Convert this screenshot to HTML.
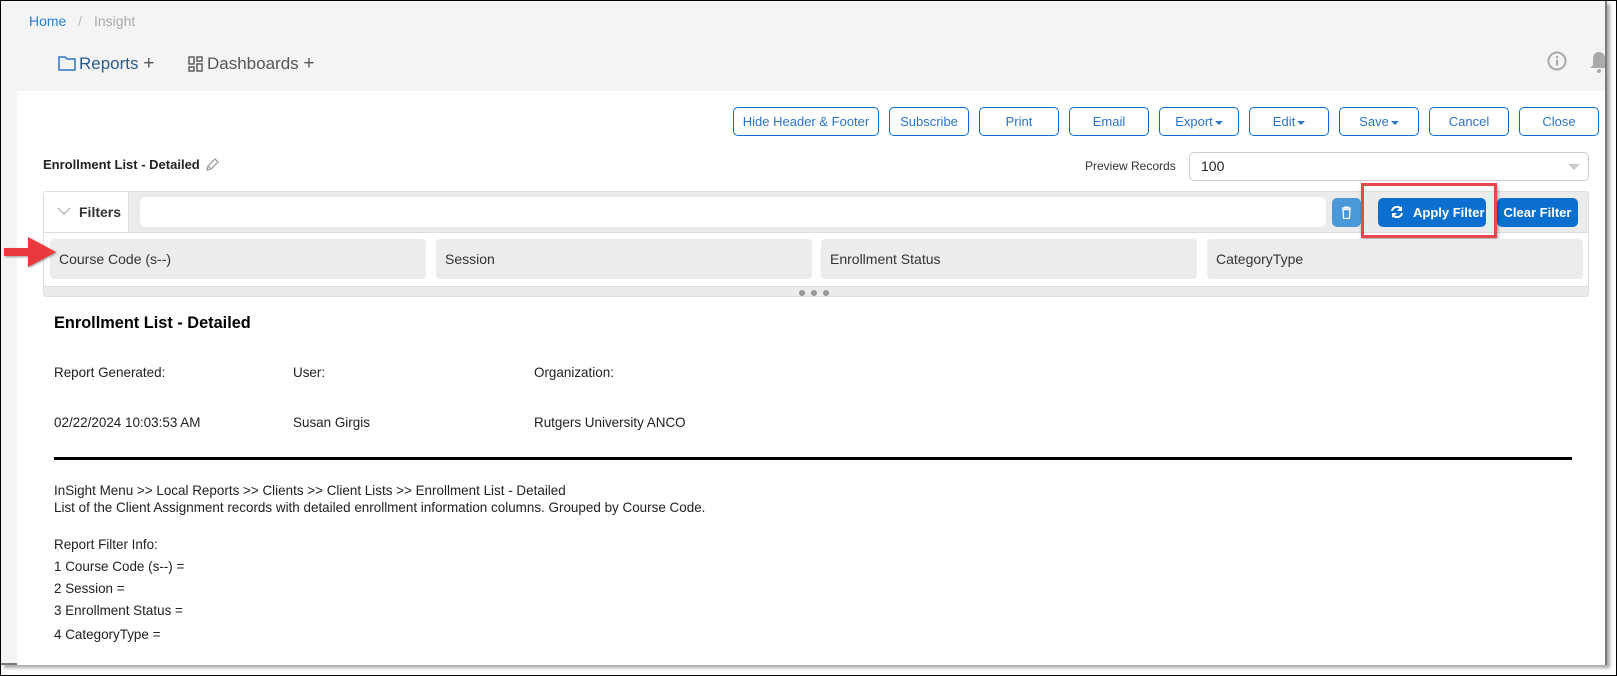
<!DOCTYPE html>
<html><head><style>
*{box-sizing:border-box;margin:0;padding:0}
body{width:1617px;height:676px;background:#fff;position:relative;overflow:hidden;font-family:"Liberation Sans",sans-serif;color:#222}
.abs{position:absolute}
#outer{left:0;top:0;width:1617px;height:676px;border:1px solid #000}
#frame{left:1px;top:1px;width:1606px;height:664px;background:#f4f4f4;border-right:2px solid #7a7a7a;border-bottom:2px solid #7a7a7a;box-shadow:3px 3px 3px #aaa;overflow:hidden}
#panel{left:16px;top:90px;width:1590px;height:574px;background:#fff}
.btn{position:absolute;top:107px;height:29px;width:80px;border:1px solid #0a6fcf;border-radius:5px;color:#2a74c9;font-size:13px;text-align:center;line-height:27px;background:#fff}
.car{display:inline-block;width:0;height:0;border-left:4px solid transparent;border-right:4px solid transparent;border-top:4px solid #2a74c9;vertical-align:middle;margin-left:2px}
.fbox{position:absolute;top:239px;height:40px;width:376px;background:#ececec;border-radius:4px;font-size:14px;line-height:40px;padding-left:9px;color:#333}
.t{position:absolute;font-size:14px;color:#222;white-space:nowrap;transform:scaleX(0.96);transform-origin:left center}
</style></head><body>
<div id="outer" class="abs"></div>
<div id="frame" class="abs">
</div>
<div class="abs" style="left:1px;top:1px;width:1604px;height:664px;overflow:hidden">
  <div class="abs" style="left:28px;top:12px;font-size:14px;color:#2a7fd4">Home</div>
  <div class="abs" style="left:77px;top:12px;font-size:14px;color:#bbb">/</div>
  <div class="abs" style="left:93px;top:12px;font-size:14px;color:#aaa">Insight</div>
  <svg class="abs" style="left:57px;top:54px" width="18" height="16" viewBox="0 0 18 16"><path d="M1 2h6l2 2h8v11H1z" fill="none" stroke="#2a74c9" stroke-width="1.5"/></svg>
  <div class="abs" style="left:78px;top:52px;font-size:17px;color:#2b5a8c">Reports <span style="color:#555;font-size:19px">+</span></div>
  <svg class="abs" style="left:187px;top:55px" width="15" height="16" viewBox="0 0 15 16"><g fill="none" stroke="#555" stroke-width="1.4"><rect x="1" y="1" width="5" height="7"/><rect x="1" y="11" width="5" height="4"/><rect x="9" y="1" width="5" height="4"/><rect x="9" y="8" width="5" height="7"/></g></svg>
  <div class="abs" style="left:206px;top:52px;font-size:17px;color:#555">Dashboards <span style="font-size:19px">+</span></div>
  <svg class="abs" style="left:1546px;top:50px" width="20" height="20" viewBox="0 0 20 20"><circle cx="10" cy="10" r="8.5" fill="none" stroke="#aaa" stroke-width="2"/><rect x="9" y="8.5" width="2" height="6" fill="#aaa"/><circle cx="10" cy="6" r="1.2" fill="#aaa"/></svg>
  <svg class="abs" style="left:1588px;top:49px" width="20" height="24" viewBox="0 0 20 24"><path d="M10 2c-4 0-6 3-6 7v6l-3 3h18l-3-3V9c0-4-2-7-6-7z" fill="#aaa"/><circle cx="10" cy="21" r="2" fill="#aaa"/></svg>
  <div id="panel" class="abs"></div>
</div>
<div class="btn" style="left:733px;width:146px">Hide Header &amp; Footer</div>
<div class="btn" style="left:889px">Subscribe</div>
<div class="btn" style="left:979px">Print</div>
<div class="btn" style="left:1069px">Email</div>
<div class="btn" style="left:1159px">Export<span class="car"></span></div>
<div class="btn" style="left:1249px">Edit<span class="car"></span></div>
<div class="btn" style="left:1339px">Save<span class="car"></span></div>
<div class="btn" style="left:1429px">Cancel</div>
<div class="btn" style="left:1519px">Close</div>

<div class="abs" style="left:43px;top:157px;font-size:13px;font-weight:bold;color:#222">Enrollment List - Detailed</div>
<svg class="abs" style="left:205px;top:157px" width="15" height="15" viewBox="0 0 15 15"><path d="M2 13l1-4 7-7 3 3-7 7z M3 9l3 3" fill="none" stroke="#999" stroke-width="1.2"/></svg>
<div class="abs" style="left:1085px;top:159px;font-size:12px;color:#333">Preview Records</div>
<div class="abs" style="left:1189px;top:152px;width:400px;height:29px;border:1px solid #ccc;border-radius:5px;font-size:14px;line-height:27px;padding-left:11px">100</div>
<div class="abs" style="left:1568px;top:164px;border-left:6px solid transparent;border-right:6px solid transparent;border-top:6px solid #ccc"></div>

<div class="abs" style="left:43px;top:191px;width:1546px;height:106px;background:#ebebeb;border:1px solid #ddd;border-radius:4px"></div>
<div class="abs" style="left:44px;top:192px;width:85px;height:40px;background:#fff;border-right:1px solid #ddd"></div>
<svg class="abs" style="left:57px;top:207px" width="14" height="9" viewBox="0 0 14 9"><path d="M1 1l6 6 6-6" fill="none" stroke="#aaa" stroke-width="1.2"/></svg>
<div class="abs" style="left:79px;top:204px;font-size:14px;font-weight:bold;color:#333">Filters</div>
<div class="abs" style="left:140px;top:197px;width:1186px;height:30px;background:#fff;border-radius:6px"></div>
<div class="abs" style="left:44px;top:232px;width:1544px;height:55px;background:#fff;border-top:1px solid #ddd;border-bottom:1px solid #ddd"></div>
<div class="abs" style="left:1332px;top:198px;width:29px;height:29px;background:#4a98d8;border-radius:5px"></div>
<svg class="abs" style="left:1341px;top:206px" width="11" height="13" viewBox="0 0 11 13"><path d="M1 2h9M4 2V1h3v1M2 3.5h7l-.6 9H2.6z" fill="none" stroke="#fff" stroke-width="1.3"/></svg>
<div class="abs" style="left:1378px;top:198px;width:108px;height:29px;background:#0a6fcf;border-radius:5px;color:#fff;font-size:13px;font-weight:bold;line-height:29px;padding-left:35px;white-space:nowrap">Apply Filter</div>
<svg class="abs" style="left:1390px;top:205px" width="14" height="14" viewBox="0 0 14 14"><g fill="none" stroke="#fff" stroke-width="2"><path d="M2 6a5 5 0 0 1 9-2"/><path d="M12 8a5 5 0 0 1-9 2"/></g><path d="M12 1v5H7z M2 13V8h5z" fill="#fff"/></svg>
<div class="abs" style="left:1497px;top:198px;width:81px;height:29px;background:#0a6fcf;border-radius:5px;color:#fff;font-size:13px;font-weight:bold;line-height:29px;text-align:center;white-space:nowrap">Clear Filter</div>
<div class="abs" style="left:1361px;top:183px;width:136px;height:55px;border:3px solid #e8474c;box-shadow:1px 2px 3px rgba(0,0,0,.35)"></div>
<div class="fbox" style="left:50px">Course Code (s--)</div>
<div class="fbox" style="left:436px">Session</div>
<div class="fbox" style="left:821px">Enrollment Status</div>
<div class="fbox" style="left:1207px">CategoryType</div>
<div class="abs" style="left:799px;top:290px;width:6px;height:6px;border-radius:3px;background:#999"></div>
<div class="abs" style="left:811px;top:290px;width:6px;height:6px;border-radius:3px;background:#999"></div>
<div class="abs" style="left:823px;top:290px;width:6px;height:6px;border-radius:3px;background:#999"></div>
<svg class="abs" style="left:2px;top:234px" width="58" height="36" viewBox="0 0 58 36"><path d="M2 14h24V3l28 15-28 15V22H2z" fill="#e9393d" style="filter:drop-shadow(1px 1px 1px rgba(0,0,0,.4))"/></svg>

<div class="t" style="left:54px;top:313px;font-size:17px;font-weight:bold;color:#000">Enrollment List - Detailed</div>
<div class="t" style="left:54px;top:364px">Report Generated:</div>
<div class="t" style="left:293px;top:364px">User:</div>
<div class="t" style="left:534px;top:364px">Organization:</div>
<div class="t" style="left:54px;top:414px">02/22/2024 10:03:53 AM</div>
<div class="t" style="left:293px;top:414px">Susan Girgis</div>
<div class="t" style="left:534px;top:414px">Rutgers University ANCO</div>
<div class="abs" style="left:54px;top:457px;width:1518px;height:3px;background:#000"></div>
<div class="t" style="left:54px;top:482px">InSight Menu &gt;&gt; Local Reports &gt;&gt; Clients &gt;&gt; Client Lists &gt;&gt; Enrollment List - Detailed</div>
<div class="t" style="left:54px;top:499px">List of the Client Assignment records with detailed enrollment information columns. Grouped by Course Code.</div>
<div class="t" style="left:54px;top:536px">Report Filter Info:</div>
<div class="t" style="left:54px;top:558px">1 Course Code (s--) =</div>
<div class="t" style="left:54px;top:580px">2 Session =</div>
<div class="t" style="left:54px;top:602px">3 Enrollment Status =</div>
<div class="t" style="left:54px;top:626px">4 CategoryType =</div>
</body></html>
